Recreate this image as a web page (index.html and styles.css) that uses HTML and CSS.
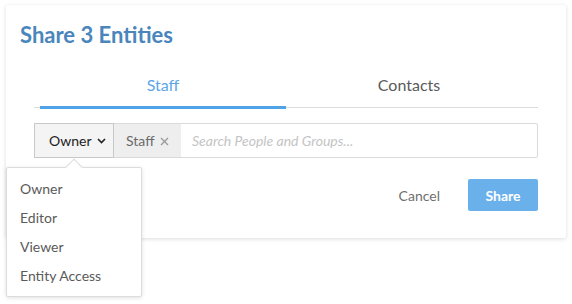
FILE: index.html
```html
<!DOCTYPE html>
<html>
<head>
<meta charset="utf-8">
<link rel="stylesheet" href="styles.css">
</head>
<body>
<div class="card">
  <h1 class="title">Share 3 Entities</h1>
  <div class="tabs">
    <div class="tab active">Staff</div>
    <div class="tab">Contacts</div>
  </div>
  <div class="field">
    <button class="role">Owner <svg class="chev" width="9" height="6" viewBox="0 0 9 6"><path d="M1 1 L4.5 4.5 L8 1" fill="none" stroke="#222" stroke-width="1.6"/></svg></button>
    <span class="tag">Staff <svg class="x" width="9" height="9" viewBox="0 0 9 9"><path d="M1 1 L8 8 M8 1 L1 8" stroke="#999" stroke-width="1.3"/></svg></span>
    <span class="placeholder">Search People and Groups...</span>
    <div class="menu">
      <div class="arrow"></div>
      <div class="item">Owner</div>
      <div class="item">Editor</div>
      <div class="item">Viewer</div>
      <div class="item">Entity Access</div>
    </div>
  </div>
  <div class="actions">
    <button class="cancel">Cancel</button>
    <button class="share">Share</button>
  </div>
</div>
</body>
</html>
```
FILE: styles.css
```css
* { box-sizing: border-box; }
html, body { margin: 0; padding: 0; background: #fff; }
body {
  font-family: Lato, "Open Sans", sans-serif;
  padding: 5px 6px;
  width: 572px;
  height: 304px;
  overflow: hidden;
}
.card {
  width: 560px;
  height: 233px;
  background: #fff;
  border-radius: 3px;
  box-shadow: 0 1px 4px rgba(0,0,0,0.14);
  padding: 17px 14px 27px;
}
.title {
  margin: 0;
  font-size: 22px;
  line-height: 26px;
  font-weight: 700;
  color: #4a86bb;
}
.tabs {
  display: flex;
  margin: 27px 14px 0;
  padding: 0 6px;
  border-bottom: 1px solid #dcdcdc;
}
.tab {
  flex: 1;
  text-align: center;
  font-size: 16px;
  line-height: 19px;
  padding-bottom: 12px;
  color: #5a5a5a;
}
.tab.active {
  color: #5aa6e8;
  border-bottom: 3px solid #4fa3e6;
  margin-bottom: -2px;
}
.field {
  position: relative;
  display: flex;
  align-items: stretch;
  margin: 15px 14px 0;
  height: 35px;
  border: 1px solid #dadada;
  border-radius: 2px;
}
.role {
  display: flex;
  align-items: center;
  gap: 5px;
  margin: -1px 0 -1px -1px;
  width: 80px;
  padding: 0 0 0 14px;
  border: 1px solid #c8c8c8;
  background: #f4f4f4;
  font-family: inherit;
  font-size: 14px;
  color: #222;
}
.chev { margin-top: 1px; }
.tag {
  display: flex;
  align-items: center;
  gap: 6px;
  width: 67px;
  padding-left: 12px;
  background: #eeeeee;
  font-size: 14px;
  color: #6a6a6a;
}
.x { margin-top: 1px; }
.placeholder {
  display: flex;
  align-items: center;
  padding-left: 11px;
  font-size: 14px;
  font-style: italic;
  color: #c4c4c4;
}
.menu {
  position: absolute;
  left: -29px;
  top: 43px;
  width: 136px;
  height: 130px;
  padding: 6px 0 8px;
  background: #fff;
  border: 1px solid #dcdcdc;
  border-radius: 2px;
  box-shadow: 0 1px 4px rgba(0,0,0,0.12);
}
.arrow {
  position: absolute;
  left: 61px;
  top: -7px;
  width: 12px;
  height: 12px;
  background: #fff;
  border-left: 1px solid #dcdcdc;
  border-top: 1px solid #dcdcdc;
  transform: rotate(45deg);
}
.item {
  height: 29px;
  line-height: 29px;
  padding-left: 13px;
  font-size: 14px;
  color: #5a5a5a;
}
.actions {
  display: flex;
  justify-content: flex-end;
  align-items: center;
  gap: 14px;
  margin: 21px 14px 0;
}
.cancel {
  border: 0;
  background: none;
  font-family: inherit;
  font-size: 14px;
  color: #707070;
  padding: 0 14px;
  height: 32px;
}
.share {
  width: 70px;
  height: 32px;
  border: 0;
  border-radius: 2px;
  background: #6ab1ec;
  color: #fff;
  font-family: inherit;
  font-size: 14px;
  font-weight: 700;
}
```
